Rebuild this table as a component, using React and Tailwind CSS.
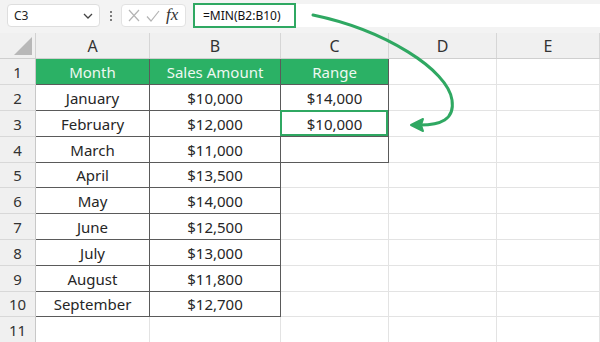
import React from "react";

const months = ["Month","January","February","March","April","May","June","July","August","September"];
const sales = ["Sales Amount","$10,000","$12,000","$11,000","$13,500","$14,000","$12,500","$13,000","$11,800","$12,700"];
const heights = [26,26,26,26,25,26,26,26,26,25,26];

function inTable(r, c) {
  if (c === 1 || c === 2) return r >= 1 && r <= 10;
  if (c === 3) return r >= 1 && r <= 4;
  return false;
}

function cellText(r, c) {
  if (c === 1) return months[r - 1] || "";
  if (c === 2) return sales[r - 1] || "";
  if (c === 3) {
    if (r === 1) return "Range";
    if (r === 2) return "$14,000";
    if (r === 3) return "$10,000";
  }
  return "";
}

const colW = ["w-[114px]", "w-[131px]", "w-[108px]", "w-[108px]", "flex-1"];

function Cell({ r, c }) {
  const darkR = inTable(r, c) || inTable(r, c + 1);
  const darkB = inTable(r, c) || inTable(r + 1, c);
  const header = r === 1 && inTable(r, c);
  const rc = darkR ? "border-r-[#5a5a5a]" : "border-r-[#e3e3e3]";
  const bc = darkB ? "border-b-[#5a5a5a]" : "border-b-[#e3e3e3]";
  const bg = header ? "bg-[#2bb165] text-[#eef8f1]" : "bg-white text-[#262626]";
  return (
    <div className={`${colW[c - 1]} relative flex items-center justify-center pt-[1px] border-r border-b ${rc} ${bc} ${bg} text-[15px] shrink-0`}>
      {cellText(r, c)}
      {r === 3 && c === 3 && (
        <div className="absolute -left-[1px] -top-[1px] right-0 bottom-0 border-2 border-[#2fa862]" />
      )}
    </div>
  );
}

export default function App() {
  return (
    <div className="relative w-[600px] h-[342px] overflow-hidden bg-white" style={{ fontFamily: '"Noto Sans", "Open Sans", sans-serif' }}>
      {/* toolbar */}
      <div className="h-[33px] bg-[#f3f3f3] flex items-start pt-[4px]">
        <div className="ml-[7px] w-[93px] h-[23px] bg-white border border-[#dedede] rounded-[4px] flex items-center justify-between pl-[6px] pr-[6px]">
          <span className="text-[12px] text-[#222]">C3</span>
          <svg width="10" height="6" viewBox="0 0 10 6"><path d="M1 1 L5 5 L9 1" fill="none" stroke="#444" strokeWidth="1.3" /></svg>
        </div>
        <div className="w-[21px] h-[23px] flex flex-col items-center justify-center gap-[2px]">
          <div className="w-[2px] h-[2px] bg-[#555] rounded-full" />
          <div className="w-[2px] h-[2px] bg-[#555] rounded-full" />
          <div className="w-[2px] h-[2px] bg-[#555] rounded-full" />
        </div>
        <div className="w-[65px] h-[23px] bg-white border border-[#e2e2e2] rounded-[4px] flex items-center pl-[6px] gap-[6px]">
          <svg width="12" height="13" viewBox="0 0 12 13"><path d="M1 1 L11 12 M11 1 L1 12" stroke="#b4b4b4" strokeWidth="1.2" /></svg>
          <svg width="14" height="12" viewBox="0 0 14 12"><path d="M1 6.5 L5 11 L13 1" fill="none" stroke="#b4b4b4" strokeWidth="1.2" /></svg>
          <span className="text-[17px] italic text-[#333] leading-none -mt-[2px]" style={{ fontFamily: '"Liberation Serif", serif' }}>fx</span>
        </div>
        <div className="ml-[7px] flex-1 h-[23px] bg-white flex items-start">
          <div className="-mt-[1px] w-[103px] h-[25px] border-2 border-[#2fa862] flex items-center pl-[8px] text-[12px] text-[#111]">
            =MIN(B2:B10)
          </div>
        </div>
      </div>
      {/* column headers */}
      <div className="flex h-[26px] bg-[#f0f0f0] border-b border-[#cfcfcf]">
        <div className="w-[36px] shrink-0 border-r border-[#d2d2d2] relative">
          <svg className="absolute right-[3px] bottom-[3px]" width="18" height="18" viewBox="0 0 18 18"><path d="M18 0 L18 18 L0 18 Z" fill="#b8b8b8" /></svg>
        </div>
        {["A", "B", "C", "D", "E"].map((l, i) => (
          <div key={l} className={`${colW[i]} shrink-0 border-r border-[#d6d6d6] flex items-center justify-center pt-[1px] text-[16px] text-[#333]`}>{l}</div>
        ))}
      </div>
      {/* rows */}
      {heights.map((h, idx) => {
        const r = idx + 1;
        return (
          <div key={r} className="flex" style={{ height: h }}>
            <div className="w-[36px] shrink-0 bg-[#f0f0f0] border-r border-r-[#c8c8c8] border-b border-b-[#d8d8d8] flex items-center justify-center pt-[1px] text-[15px] text-[#333]">{r}</div>
            {[1, 2, 3, 4, 5].map((c) => <Cell key={c} r={r} c={c} />)}
          </div>
        );
      })}
      {/* arrow */}
      <svg className="absolute left-0 top-0 pointer-events-none" width="600" height="342" viewBox="0 0 600 342">
        <path d="M313 15 C 385 30, 448 70, 452 100 C 455 120, 440 125, 420 125" fill="none" stroke="#2fa862" strokeWidth="3" strokeLinecap="round" />
        <path d="M411 125 L423 119 L421 125 L423 131 Z" fill="#2fa862" stroke="#2fa862" strokeWidth="2" strokeLinejoin="round" />
      </svg>
    </div>
  );
}
